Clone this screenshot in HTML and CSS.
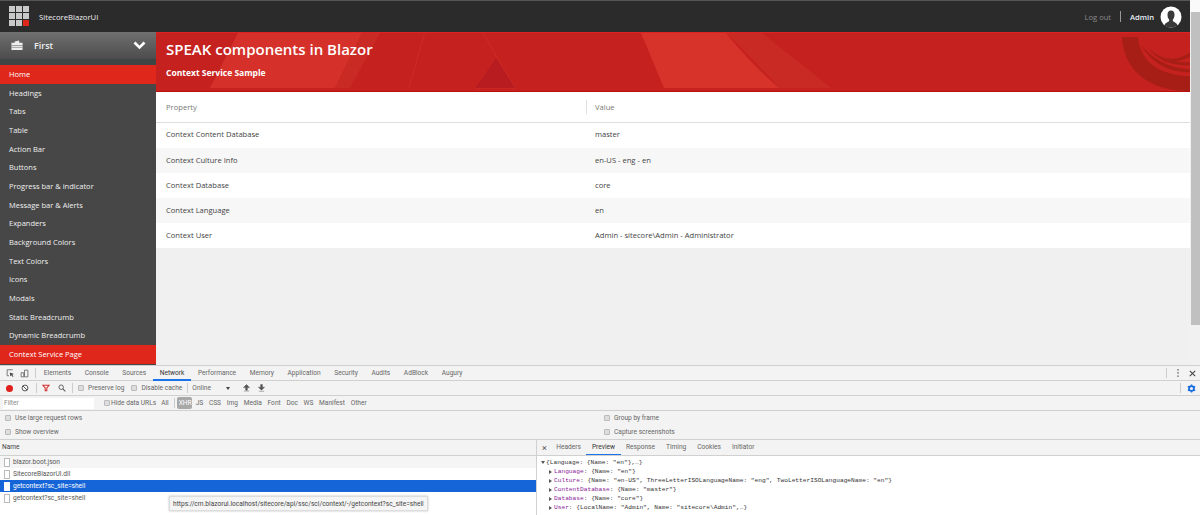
FILE: index.html
```html
<!DOCTYPE html>
<html lang="en">
<head>
<meta charset="utf-8">
<title>SitecoreBlazorUI</title>
<link rel="stylesheet" href="styles.css">
</head>
<body>
<div class="app">
  <div class="main">
    <header class="topbar">
      <div class="logo"><i></i><i></i><i></i><i></i><i></i><i></i><i></i><i></i><i class="red"></i></div>
      <span class="brand">SitecoreBlazorUI</span>
      <span class="spacer"></span>
      <a class="logout">Log out</a>
      <span class="topsep"></span>
      <span class="admin">Admin</span>
      <svg class="avatar" viewBox="0 0 22 22"><circle cx="11" cy="11" r="10.5" fill="#fff"/><path d="M4.5 19.5c.4-3 3.6-3.4 4.6-4.6.2-.6.1-1.200-.2-1.700C7.900 12 7.500 10.500 7.500 8.500 7.500 6 9 4.500 11 4.500s3.500 1.500 3.500 4c0 2-.4 3.500-1.400 4.700-.3.500-.4 1.100-.2 1.700 1 1.200 4.200 1.600 4.600 4.600-1.700 1.300-3.800 2-6.500 2s-4.800-.7-6.500-2z" fill="#3a3a3a"/></svg>
    </header>
    <div class="body">
      <nav class="sidebar">
        <div class="sidehead">
          <svg class="case" viewBox="0 0 13 11"><path d="M4 2.500V1.200L8.800 0 9 2.500h3.500V10.500H.5V2.500z" fill="#eee"/><path d="M.5 5.500h12M.5 7.500h12" stroke="#777" stroke-width=".7"/></svg>
          <span class="sidetitle">First</span>
          <svg class="chev" viewBox="0 0 13 9"><path d="M1.500 1.500l5 5 5-5" fill="none" stroke="#fff" stroke-width="2.600"/></svg>
        </div>
        <div class="sideband"></div>
        <a class="item active">Home</a>
        <a class="item">Headings</a>
        <a class="item">Tabs</a>
        <a class="item">Table</a>
        <a class="item">Action Bar</a>
        <a class="item">Buttons</a>
        <a class="item">Progress bar &amp; indicator</a>
        <a class="item">Message bar &amp; Alerts</a>
        <a class="item">Expanders</a>
        <a class="item">Background Colors</a>
        <a class="item">Text Colors</a>
        <a class="item">Icons</a>
        <a class="item">Modals</a>
        <a class="item">Static Breadcrumb</a>
        <a class="item">Dynamic Breadcrumb</a>
        <a class="item active">Context Service Page</a>
      </nav>
      <main class="content">
        <section class="hero">
          <svg class="hero-art" viewBox="0 0 1034 59" preserveAspectRatio="none">
            <path d="M82 0H206L179 56H54z" fill="#d5312a"/>
            <path d="M206 0H224L194 56H179z" fill="#ca2a24"/>
            <path d="M268.500 0L253 56" stroke="#d0302a" stroke-width=".7" fill="none"/>
            <path d="M327 0L359 56H319L340 25" stroke="#d0302a" stroke-width=".7" fill="none"/>
            <path d="M340 25L359 56H319z" fill="#b81c20"/>
            <path d="M485 0H570C590 25 610 45 623 56H508z" fill="#d8332a"/>
            <path d="M570 0H606L675 56H623C610 40 590 20 570 0z" fill="#ca2a24"/>
            <path d="M966 4H982C984 30 1005 43 1034 44V59C995 59 968 40 966 4z" fill="#a61e16"/>
            <path d="M985 12C995 30 1012 40 1034 40V37C1012 36 996 26 985 12zM992 15C1002 28 1015 33 1034 33V30C1018 30 1003 26 992 15zM1005 24C1015 28 1025 26 1034 20V24C1025 30 1013 30 1005 24z" fill="#a61e16"/>
          </svg>
          <h1 class="hero-title">SPEAK components in Blazor</h1>
          <h2 class="hero-sub">Context Service Sample</h2>
        </section>
        <table class="grid">
          <thead>
            <tr><th class="col-a">Property</th><th class="col-b">Value</th></tr>
          </thead>
          <tbody>
            <tr><td>Context Content Database</td><td class="val">master</td></tr>
            <tr><td>Context Culture Info</td><td class="val">en-US - eng - en</td></tr>
            <tr><td>Context Database</td><td class="val">core</td></tr>
            <tr><td>Context Language</td><td class="val">en</td></tr>
            <tr><td>Context User</td><td class="val">Admin - sitecore\Admin - Administrator</td></tr>
          </tbody>
        </table>
      </main>
    </div>
  </div>
  <div class="scrollbar"><span class="scroll-up"></span><span class="thumb"></span></div>
</div>

<div class="devtools">
  <div class="bar tabs">
    <svg class="ic ic-inspect" viewBox="0 0 12 12"><path d="M9 1H1.500v8H4" fill="none" stroke="#555"/><path d="M5 4.500l5.500 2-2.200 1 1.700 2.500-1 .7-1.700-2.500-1.500 1.500z" fill="#444"/></svg>
    <svg class="ic ic-device" viewBox="0 0 12 12"><path d="M6 1.500h4.500v9H6zM1.500 5H5v5.500H1.500z" fill="none" stroke="#555"/></svg>
    <span class="vsep vsep-tabs"></span>
    <span class="tab">Elements</span>
    <span class="tab">Console</span>
    <span class="tab">Sources</span>
    <span class="tab on">Network</span>
    <span class="tab">Performance</span>
    <span class="tab">Memory</span>
    <span class="tab">Application</span>
    <span class="tab">Security</span>
    <span class="tab">Audits</span>
    <span class="tab">AdBlock</span>
    <span class="tab">Augury</span>
    <span class="spacer"></span>
    <span class="vsep"></span>
    <svg class="ic ic-more" viewBox="0 0 4 12"><path d="M2 1.500v1.500M2 5.200v1.500M2 9v1.500" stroke="#333" stroke-width="1.400"/></svg>
    <svg class="ic ic-close" viewBox="0 0 10 10"><path d="M2 2l6 6M8 2L2 8" stroke="#444" stroke-width="1.200"/></svg>
  </div>
  <div class="bar tools">
    <span class="rec"></span>
    <svg class="ic ic-block" viewBox="0 0 10 10"><circle cx="5" cy="5" r="3.700" fill="none" stroke="#555" stroke-width="1.200"/><path d="M2.500 2.500l5 5" stroke="#555" stroke-width="1.200"/></svg>
    <span class="vsep vsep-a"></span>
    <svg class="ic ic-filter" viewBox="0 0 10 10"><path d="M1 1.500h8L6 5v3.500L4 8.500V5z" fill="none" stroke="#d32f2f" stroke-width="1.300"/></svg>
    <svg class="ic ic-search" viewBox="0 0 10 10"><circle cx="4" cy="4" r="2.800" fill="none" stroke="#555" stroke-width="1.100"/><path d="M6 6l3.200 3.200" stroke="#555" stroke-width="1.300"/></svg>
    <span class="vsep vsep-b"></span>
    <label class="check ck-log"><span class="box"></span>Preserve log</label>
    <label class="check ck-cache"><span class="box"></span>Disable cache</label>
    <span class="vsep vsep-c"></span>
    <span class="online">Online</span>
    <span class="caret"></span>
    <svg class="ic ic-up" viewBox="0 0 8 9"><path d="M4 .5L7.500 4H5v3H3V4H.5zM1 8h6" fill="#555" stroke="#555" stroke-width=".5"/></svg>
    <svg class="ic ic-down" viewBox="0 0 8 9"><path d="M4 7L7.500 3.500H5V.5H3v3H.5zM1 8.300h6" fill="#555" stroke="#555" stroke-width=".5"/></svg>
    <span class="spacer"></span>
    <span class="vsep"></span>
    <svg class="ic ic-gear" viewBox="0 0 10 10"><circle cx="5" cy="5" r="2.700" fill="none" stroke="#1a6fe0" stroke-width="2"/><path d="M5 .5v2M5 7.500v2M1 2.700l1.700 1M7.300 6.300l1.700 1M1 7.300l1.700-1M7.300 3.700l1.700-1" stroke="#1a6fe0" stroke-width="1.600"/></svg>
  </div>
  <div class="bar filters">
    <span class="filter-input">Filter</span>
    <label class="check ck-hide"><span class="box"></span>Hide data URLs</label>
    <span class="ftype ft-all">All</span>
    <span class="vsep vsep-f"></span>
    <span class="ftype pill">XHR</span>
    <span class="ftype">JS</span>
    <span class="ftype">CSS</span>
    <span class="ftype">Img</span>
    <span class="ftype">Media</span>
    <span class="ftype">Font</span>
    <span class="ftype">Doc</span>
    <span class="ftype">WS</span>
    <span class="ftype">Manifest</span>
    <span class="ftype">Other</span>
  </div>
  <div class="options">
    <label class="check opt"><span class="box"></span>Use large request rows</label>
    <label class="check opt"><span class="box"></span>Group by frame</label>
    <label class="check opt"><span class="box"></span>Show overview</label>
    <label class="check opt"><span class="box"></span>Capture screenshots</label>
  </div>
  <div class="split">
    <div class="reqs">
      <div class="name-head">Name</div>
      <div class="req alt"><span class="file"></span>blazor.boot.json</div>
      <div class="req"><span class="file"></span>SitecoreBlazorUI.dll</div>
      <div class="req sel"><span class="file"></span>getcontext?sc_site=shell</div>
      <div class="req"><span class="file"></span>getcontext?sc_site=shell</div>
      <div class="tooltip">https://cm.blazorui.localhost/sitecore/api/ssc/sci/context/-/getcontext?sc_site=shell</div>
    </div>
    <div class="detail">
      <div class="detail-tabs">
        <span class="dclose">×</span>
        <span class="dtab">Headers</span>
        <span class="dtab on">Preview</span>
        <span class="dtab">Response</span>
        <span class="dtab">Timing</span>
        <span class="dtab">Cookies</span>
        <span class="dtab">Initiator</span>
      </div>
      <div class="json">
        <div class="line root"><span class="tri down"></span>{Language: {Name: "en"},…}</div>
        <div class="line"><span class="tri"></span><span class="key">Language</span>: {Name: "en"}</div>
        <div class="line"><span class="tri"></span><span class="key">Culture</span>: {Name: "en-US", ThreeLetterISOLanguageName: "eng", TwoLetterISOLanguageName: "en"}</div>
        <div class="line"><span class="tri"></span><span class="key">ContentDatabase</span>: {Name: "master"}</div>
        <div class="line"><span class="tri"></span><span class="key">Database</span>: {Name: "core"}</div>
        <div class="line"><span class="tri"></span><span class="key">User</span>: {LocalName: "Admin", Name: "sitecore\Admin",…}</div>
      </div>
    </div>
  </div>
</div>
</body>
</html>
```

FILE: styles.css
```css
* { box-sizing: border-box; }
html, body { margin: 0; height: 515px; overflow: hidden; }
body { font-family: "Open Sans", "Noto Sans", sans-serif; background: #fff; display: flex; flex-direction: column; }
.spacer { flex: 1; }

.app { height: 365px; display: flex; flex: none; }
.main { flex: 1; display: flex; flex-direction: column; min-width: 0; }

.topbar { height: 32px; flex: none; background: #2b2b2b; border-top: 1px solid #555; display: flex; align-items: center; color: #fff; padding-right: 8px; }
.logo { width: 21px; height: 21px; margin-left: 9px; display: grid; grid-template-columns: repeat(3, 6px); grid-auto-rows: 6px; gap: 1px; }
.logo i { background: #c8c8c8; }
.logo i.red { background: #e0261c; }
.brand { font-size: 7.7px; margin-left: 9px; color: #f0f0f0; }
.logout { font-size: 7.6px; color: #8a8a8a; }
.topsep { width: 1px; height: 11px; background: #999; margin: 0 9px; }
.admin { font-size: 7.6px; font-weight: 600; color: #e8eef8; }
.avatar { width: 22px; height: 22px; margin-left: 6px; }

.body { flex: 1; display: flex; min-height: 0; }
.sidebar { width: 156px; flex: none; background: #474747; display: flex; flex-direction: column; }
.sidehead { height: 27px; flex: none; background: linear-gradient(#707070, #4c4c4c); display: flex; align-items: center; padding-left: 11px; color: #fff; }
.case { width: 12px; height: 11px; }
.sidetitle { font-size: 9px; font-weight: 600; margin-left: 11px; flex: 1; color: #eee; }
.chev { width: 13px; height: 9px; margin-right: 10px; }
.sideband { height: 6px; flex: none; background: #3d4545; }
.item { height: 18.67px; flex: none; font-size: 7.5px; line-height: 19px; padding-left: 9px; color: #f0f0f0; }
.item.active { background: #e0271c; color: #fff; }

.content { flex: 1; background: #f0f0f0; min-width: 0; }
.hero { position: relative; height: 60px; background: #c5221f; border-top: 1px solid #dd2222; border-bottom: 1px solid #b80f0f; color: #fff; padding: 6px 0 0 10px; overflow: hidden; }
.hero-art { position: absolute; left: 0; top: 0; width: 100%; height: 100%; }
.hero-title { position: relative; margin: 0; font-size: 15px; line-height: 20px; font-weight: 600; }
.hero-sub { position: relative; margin: 7px 0 0; font-size: 8.5px; line-height: 14px; font-weight: 700; }

.grid { width: 100%; border-collapse: collapse; table-layout: fixed; font-size: 7.6px; color: #444; background: #fff; }
.grid th { height: 30px; padding: 0 0 0 10px; font-weight: 400; text-align: left; color: #777; border-bottom: 1px solid #ddd; }
.col-a { width: 430px; }
.grid th.col-b { padding-left: 9px; position: relative; }
.grid th.col-b::before { content: ""; position: absolute; left: 0; top: 8px; height: 14px; width: 1px; background: #e0e0e0; }
.grid td { height: 25px; padding: 0 0 2px 10px; }
.grid tbody tr:first-child td { height: 26px; }
.grid td.val { padding-left: 9px; }
.grid tbody tr:nth-child(even) { background: #f7f7f7; }

.scrollbar { width: 10px; flex: none; background: #f1f1f1; display: flex; flex-direction: column; }
.scroll-up { height: 12px; flex: none; background: #fafafa; }
.thumb { height: 313px; background: #c0c0c0; flex: none; margin-left: 1px; }

.devtools { height: 150px; flex: none; background: #f3f3f3; border-top: 1px solid #d0d0d0; font-family: Roboto, "Open Sans", sans-serif; font-size: 6.6px; color: #666; display: flex; flex-direction: column; }
.bar { flex: none; display: flex; align-items: center; border-bottom: 1px solid #d0d0d0; }
.tabs { height: 15px; }
.tools { height: 15px; }
.filters { height: 15px; }
.ic { flex: none; display: block; }
.vsep { width: 1px; height: 10px; background: #ccc; flex: none; }

.ic-inspect { width: 9px; height: 9px; margin-left: 6px; }
.ic-device { width: 9px; height: 9px; margin-left: 5px; }
.vsep-tabs { margin-left: 6px; margin-right: 1px; }
.tab { padding: 0 6.8px; height: 14px; line-height: 14px; }
.tab.on { color: #333; border-bottom: 1px solid #1a73e8; box-shadow: 0 1px 0 #1a73e8; }
.ic-more { width: 4px; height: 10px; margin: 0 8px 0 9px; }
.ic-close { width: 9px; height: 9px; margin-right: 3px; }

.rec { width: 7px; height: 7px; border-radius: 50%; background: #e0201c; margin-left: 6px; flex: none; }
.ic-block { width: 8px; height: 8px; margin-left: 8px; }
.vsep-a { margin-left: 7px; }
.ic-filter { width: 8px; height: 8px; margin-left: 5px; }
.ic-search { width: 8px; height: 8px; margin-left: 8px; }
.vsep-b { margin-left: 6px; }
.check { display: flex; align-items: center; white-space: nowrap; }
.box { width: 6px; height: 6px; background: #ddd; border: 1px solid #bbb; border-radius: 1px; margin-right: 4px; flex: none; }
.ck-log { margin-left: 5px; }
.ck-cache { margin-left: 7px; }
.vsep-c { margin-left: 5px; }
.online { margin-left: 4px; }
.caret { width: 0; height: 0; border: 2.500px solid transparent; border-top: 3.500px solid #444; margin: 2px 0 0 15px; }
.ic-up { width: 7px; height: 8px; margin-left: 13px; }
.ic-down { width: 7px; height: 8px; margin-left: 8px; }
.ic-gear { width: 9px; height: 9px; margin: 0 4px 0 6px; }

.filter-input { width: 91px; height: 11px; margin-left: 3px; background: #fff; color: #888; line-height: 11px; padding-left: 1px; }
.ck-hide { margin-left: 10px; }
.ck-hide .box { margin-right: 1px; }
.ftype { margin-left: 5.700px; }
.ft-all { margin-left: 5px; }
.vsep-f { margin-left: 5px; }
.ftype.pill { margin-left: 2px; background: #a8a8a8; color: #fff; border-radius: 2px; padding: 0 2px; height: 12px; line-height: 12px; width: 15px; }
.ftype.pill + .ftype { margin-left: 4px; }

.options { height: 29px; flex: none; border-bottom: 1px solid #d0d0d0; display: grid; grid-template-columns: 602px 1fr; grid-auto-rows: 14px; }
.opt { padding-left: 5px; }
.opt:nth-child(even) { padding-left: 2px; }
.opt .box { margin-right: 4px; }

.split { flex: 1; display: flex; min-height: 0; background: #fff; border-top: 0; }
.reqs { position: relative; width: 537px; flex: none; border-right: 1px solid #d0d0d0; }
.name-head { height: 16px; line-height: 14px; padding-left: 2px; background: #f3f3f3; border-bottom: 1px solid #d0d0d0; color: #444; }
.req { height: 12px; display: flex; align-items: center; line-height: 12px; padding-left: 4px; color: #555; }
.req.alt { background: #f5f5f5; }
.req.sel { background: #1565d8; color: #fff; }
.file { width: 6px; height: 9px; background: #fff; border: 1px solid #bbb; margin-right: 3px; flex: none; }
.sel .file { border-color: #fff; }
.tooltip { position: absolute; left: 169px; top: 56px; width: 259px; height: 15px; line-height: 14px; background: #f5f5f5; border: 1px solid #ddd; box-shadow: 0 0 2px #bbb; padding-left: 3px; font-size: 6.6px; color: #444; white-space: nowrap; }

.detail { flex: 1; min-width: 0; }
.detail-tabs { height: 16px; background: #f3f3f3; border-bottom: 1px solid #d0d0d0; display: flex; align-items: center; }
.dclose { margin-left: 5px; margin-right: 1px; font-size: 9px; color: #555; line-height: 12px; }
.dtab { padding: 0 5.500px; height: 15px; line-height: 15px; }
.dclose + .dtab { margin-left: 3px; }
.dtab.on { color: #333; border-bottom: 1px solid #1a73e8; }
.json { font-family: "Liberation Mono", "DejaVu Sans Mono", monospace; font-size: 6.2px; color: #333; padding-top: 2px; }
.line { height: 9.100px; line-height: 9.100px; padding-left: 12px; white-space: nowrap; display: flex; align-items: center; }
.line.root { padding-left: 4px; }
.key { color: #8a1a96; }
.tri { width: 0; height: 0; border-left: 3px solid #555; border-top: 2px solid transparent; border-bottom: 2px solid transparent; margin-right: 2px; flex: none; }
.tri.down { border-top: 3px solid #555; border-left: 2px solid transparent; border-right: 2px solid transparent; border-bottom: 0; margin-right: 1px; }
```
